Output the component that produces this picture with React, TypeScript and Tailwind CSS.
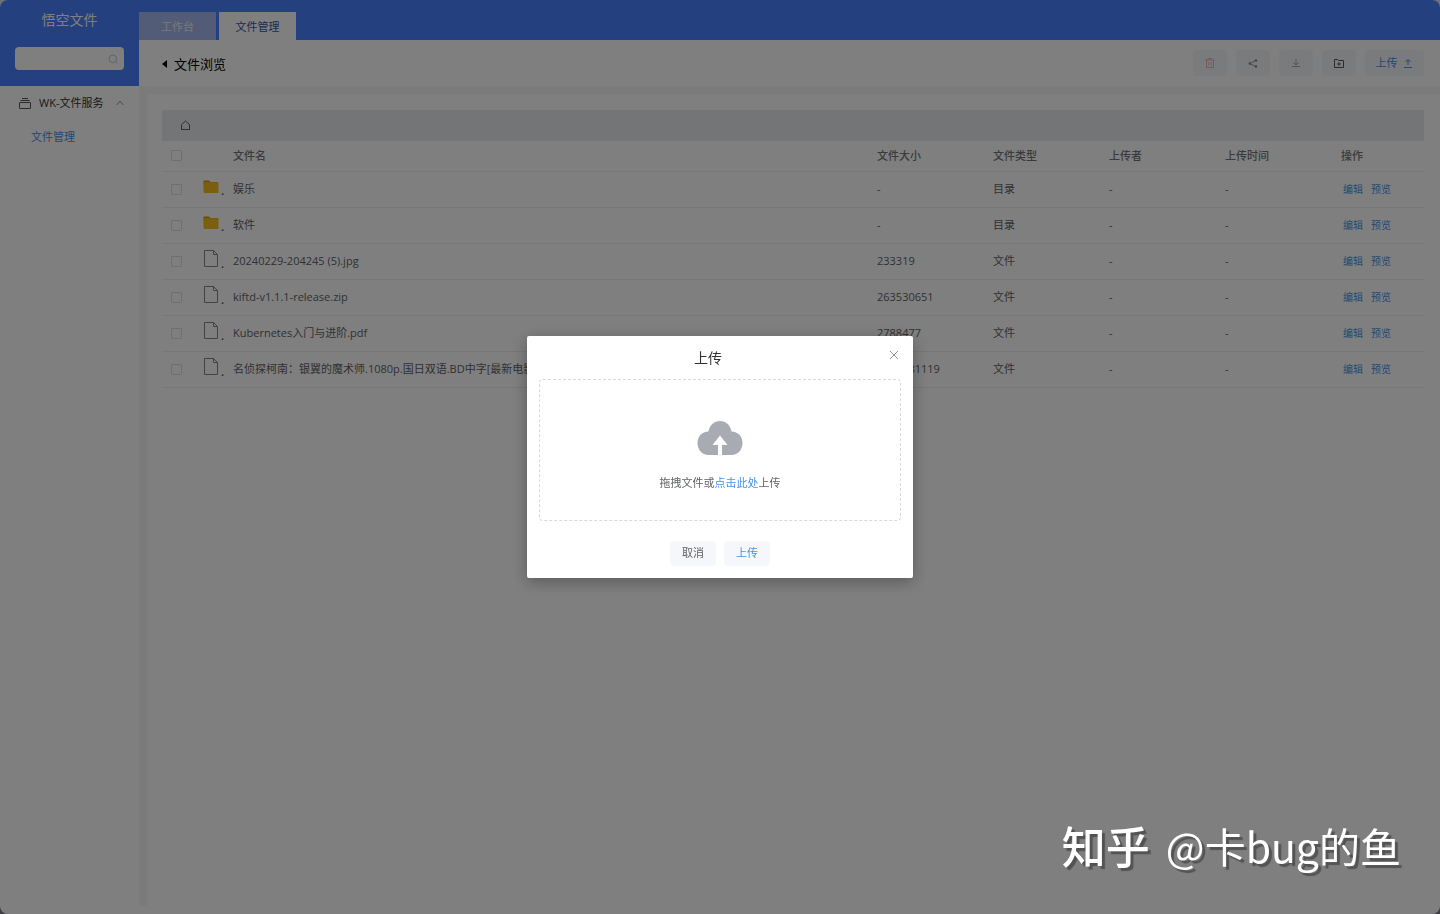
import { ReactNode } from "react";

type FileRow = {
  name: string;
  size: string;
  type: string;
  folder?: boolean;
};

const files: FileRow[] = [
  { name: "娱乐", size: "-", type: "目录", folder: true },
  { name: "软件", size: "-", type: "目录", folder: true },
  { name: "20240229-204245 (5).jpg", size: "233319", type: "文件" },
  { name: "kiftd-v1.1.1-release.zip", size: "263530651", type: "文件" },
  { name: "Kubernetes入门与进阶.pdf", size: "2788477", type: "文件" },
  {
    name: "名侦探柯南：银翼的魔术师.1080p.国日双语.BD中字[最新电影].mp4",
    size: "1762481119",
    type: "文件",
  },
];

export default function App() {
  return (
    <div className="min-h-screen bg-linear-to-b from-[#e4e0e0] to-[#808088] font-['Open_Sans','Noto_Sans_CJK_SC',sans-serif] text-[11px] leading-4 text-[#606266]">
      <div className="flex min-h-screen overflow-hidden rounded-lg bg-white pb-2">
        <Sidebar />
        <div className="flex min-w-0 flex-1 flex-col">
          <Tabs />
          <Toolbar />
          <main className="flex-1 border-t-8 border-l-8 border-[#f6f6f8] pt-4 pr-4 pl-[15px]">
            <nav
              aria-label="路径"
              className="flex h-[31px] items-center bg-[#e9ebee] px-[18px]"
            >
              <a href="#" aria-label="根目录" className="text-[#606266]">
                <HomeIcon />
              </a>
            </nav>
            <FileTable />
          </main>
        </div>
      </div>

      <div className="fixed inset-0 flex items-center justify-center bg-black/50">
        <UploadDialog />
      </div>

      <Watermark />
    </div>
  );
}

function Sidebar() {
  return (
    <aside className="w-[139px] shrink-0">
      <div className="flex h-[86px] flex-col items-center bg-[#4a80ff] px-[15px] pt-2.5">
        <h1 className="text-sm leading-5 text-white">悟空文件</h1>
        <label className="mt-[17px] flex h-[23px] w-full items-center rounded-sm bg-white px-1.5">
          <input
            type="text"
            aria-label="搜索"
            className="min-w-0 flex-1 outline-none"
          />
          <SearchIcon />
        </label>
      </div>
      <button className="flex h-[34px] w-full items-center pl-[18px] text-[#303133]">
        <BoxIcon />
        <span className="ml-[7px]">WK-文件服务</span>
        <svg className="ml-3 size-2.5" viewBox="0 0 10 10" fill="none" stroke="#909399">
          <path d="M1.5 7 5 3.2 8.5 7" />
        </svg>
      </button>
      <a href="#" className="flex h-[33px] items-center pl-[31px] text-[#4a90e8]">
        文件管理
      </a>
    </aside>
  );
}

function Tabs() {
  return (
    <div className="flex h-10 items-end gap-[3px] bg-[#4a80ff]">
      <button className="h-7 w-[77px] bg-[#a4b9ee] pt-0.5 text-[#f0f2f5]">
        工作台
      </button>
      <button className="h-7 w-[77px] bg-white pt-0.5 text-[#33589f]">
        文件管理
      </button>
    </div>
  );
}

function Toolbar() {
  return (
    <div className="flex h-[46px] items-center justify-between pr-4 pl-[22px]">
      <button className="flex items-center gap-1.5 pt-0.5 text-black">
        <svg className="h-2 w-[7px]" viewBox="0 0 7 8">
          <path d="M6 0v8L1 4z" />
        </svg>
        <span className="text-[13px]">文件浏览</span>
      </button>
      <div className="flex gap-[9px]">
        <ToolButton label="删除">
          <svg className="size-3" viewBox="0 0 12 12" fill="none" stroke="#ecb6b6">
            <path d="M1 3h10M4 3V1.500h4V3M2.500 3v7.500h7V3M4.800 5v3.500M7.200 5v3.500" />
          </svg>
        </ToolButton>
        <ToolButton label="分享">
          <svg className="size-3" viewBox="0 0 12 12" fill="none" stroke="#84868c">
            <path d="M2.500 6.500 9 3.500M2.500 6.500l6.500 3" strokeWidth="0.8" />
            <g fill="#84868c" stroke="none">
              <circle cx="2.800" cy="6.500" r="1.200" />
              <circle cx="9" cy="3.500" r="1.200" />
              <circle cx="9" cy="9.500" r="1.200" />
            </g>
          </svg>
        </ToolButton>
        <ToolButton label="下载">
          <svg className="size-3" viewBox="0 0 12 12" fill="none" stroke="#a4a7ae">
            <path d="M6 2v5.500M3.500 5.500 6 8l2.500-2.500M2 9.500h8" />
          </svg>
        </ToolButton>
        <ToolButton label="新建文件夹">
          <svg className="size-3" viewBox="0 0 12 12" fill="none" stroke="#55575c">
            <path d="M1.500 2.500h3l1.200 1H10.500v7h-9zM6 5.200v3.600M4.200 7h3.600" />
          </svg>
        </ToolButton>
        <button className="flex h-[26px] w-[59px] items-center justify-center gap-1 rounded-sm bg-[#f5f7fa] text-[#4a90e8]">
          上传
          <svg className="size-3" viewBox="0 0 12 12" fill="none" stroke="currentColor">
            <path d="M6 8V2.500M3.500 5 6 2.500 8.500 5M2 10.500h8" />
          </svg>
        </button>
      </div>
    </div>
  );
}

function ToolButton({ label, children }: { label: string; children: ReactNode }) {
  return (
    <button
      aria-label={label}
      className="flex h-[26px] w-[34px] items-center justify-center rounded-sm bg-[#f5f7fa]"
    >
      {children}
    </button>
  );
}

function FileTable() {
  return (
    <table className="w-full table-fixed text-left">
      <colgroup>
        <col className="w-[33px]" />
        <col className="w-[30px]" />
        <col />
        <col className="w-[116px]" />
        <col className="w-[116px]" />
        <col className="w-[116px]" />
        <col className="w-[116px]" />
        <col className="w-[91px]" />
      </colgroup>
      <thead>
        <tr className="h-[30px] border-b border-[#ebeef5] text-[#74767b]">
          <th className="pl-[9px]">
            <Tick label="全选" />
          </th>
          <th></th>
          <th className="pl-2 font-medium">文件名</th>
          <th className="pl-2 font-medium">文件大小</th>
          <th className="pl-2 font-medium">文件类型</th>
          <th className="pl-2 font-medium">上传者</th>
          <th className="pl-2 font-medium">上传时间</th>
          <th className="pl-2 font-medium">操作</th>
        </tr>
      </thead>
      <tbody>
        {files.map((file) => (
          <tr key={file.name} className="h-9 border-b border-[#ebeef5]">
            <td className="pl-[9px]">
              <Tick label={file.name} />
            </td>
            <td className="pl-2">
              <div className="flex items-end pb-1">
                {file.folder ? <FolderIcon /> : <DocIcon />}
                <span className="-mb-1 ml-0.5 leading-4 font-bold">.</span>
              </div>
            </td>
            <td className="truncate pl-2">{file.name}</td>
            <td className="pl-2">{file.size}</td>
            <td className="pl-2">{file.type}</td>
            <td className="pl-2">-</td>
            <td className="pl-2">-</td>
            <td className="pl-2.5">
              <div className="flex gap-2 text-[10px] text-[#4a90e8]">
                <button>编辑</button>
                <button>预览</button>
              </div>
            </td>
          </tr>
        ))}
      </tbody>
    </table>
  );
}

function Tick({ label }: { label: string }) {
  return (
    <input
      type="checkbox"
      aria-label={label}
      className="block size-[11px] appearance-none rounded-[1px] border border-[#dcdfe6] bg-white"
    />
  );
}

function UploadDialog() {
  return (
    <div
      role="dialog"
      aria-label="上传"
      className="w-[386px] rounded-xs bg-white px-3 pb-3 shadow-[0_4px_16px_rgba(0,0,0,0.3)]"
    >
      <div className="flex h-[43px] items-center">
        <h2 className="flex-1 text-center text-sm text-[#303133]">上传</h2>
        <button aria-label="关闭" className="flex h-9 w-6 justify-end pt-2 text-[#909399]">
          <svg className="size-3.5" viewBox="0 0 14 14" fill="none" stroke="currentColor">
            <path d="m3 3 8 8M11 3l-8 8" />
          </svg>
        </button>
      </div>
      <div className="flex h-[142px] flex-col items-center rounded border border-dashed border-[#d9d9d9] pt-10">
        <CloudIcon />
        <p className="mt-[19px]">
          拖拽文件或
          <a href="#" className="text-[#4a90e8]">
            点击此处
          </a>
          上传
        </p>
      </div>
      <div className="mt-5 flex justify-center gap-2">
        <button className="h-[25px] w-[46px] rounded-sm bg-[#f5f7fa] pb-0.5">
          取消
        </button>
        <button className="h-[25px] w-[46px] rounded-sm bg-[#f5f7fa] pb-0.5 text-[#4a90e8]">
          上传
        </button>
      </div>
    </div>
  );
}

function Watermark() {
  return (
    <div className="pointer-events-none fixed right-[39px] bottom-[39px] flex items-center gap-4 font-['Noto_Sans_CJK_SC',sans-serif] text-[41px] leading-[60px] text-white text-shadow-[3px_3px_1px_rgba(0,0,0,0.35)]">
      <span className="text-[44px] font-medium">知乎</span>
      <span>@卡bug的鱼</span>
    </div>
  );
}

function SearchIcon() {
  return (
    <svg className="size-2.5" viewBox="0 0 10 10" fill="none" stroke="#c0c4cc">
      <circle cx="4.800" cy="4.800" r="3.800" />
      <path d="m7.500 7.500 2 2" />
    </svg>
  );
}

function BoxIcon() {
  return (
    <svg className="h-[13px] w-3.5" viewBox="0 0 14 13" fill="none" stroke="#55575c">
      <path d="M4 1.500h6M2.500 3.500h9" />
      <rect x="1.500" y="5.500" width="11" height="6" rx="0.5" />
    </svg>
  );
}

function HomeIcon() {
  return (
    <svg className="size-[11px]" viewBox="0 0 11 11" fill="none" stroke="currentColor">
      <path d="M1.500 10V4.500L5.500 1l4 3.500V10M1 9.500h3M7 9.500h3M4 9.500h3" />
    </svg>
  );
}

function FolderIcon() {
  return (
    <svg className="h-4 w-4" viewBox="0 0 16 16">
      <path d="M1 1.500h5L7.500 3H15v3H0.500V2z" fill="#d99a00" />
      <rect x="0.500" y="3.200" width="15" height="10.800" rx="0.8" fill="#f5be22" />
    </svg>
  );
}

function DocIcon() {
  return (
    <svg className="h-[18px] w-4" viewBox="0 0 16 18" fill="none" stroke="#84868c">
      <path d="M1.500 0.500h9l4 4v12h-13z" />
      <path d="M10.500 0.500v4h4" />
    </svg>
  );
}

function CloudIcon() {
  return (
    <svg className="h-[36px] w-[46px]" viewBox="0 0 46 36">
      <path
        d="M11.500 11.500C12.500 5.500 17 1 23 1s10.500 4.500 11.500 10.500C41 11.500 45.500 16.500 45.500 23S41 35 34.500 35h-23C5 35 .5 29.500 .5 23s4.500-11.500 11-11.500z"
        fill="#a8abb2"
      />
      <path d="M23 15.500 30.500 25H25v11h-4V25h-5.500z" fill="#fff" />
    </svg>
  );
}
